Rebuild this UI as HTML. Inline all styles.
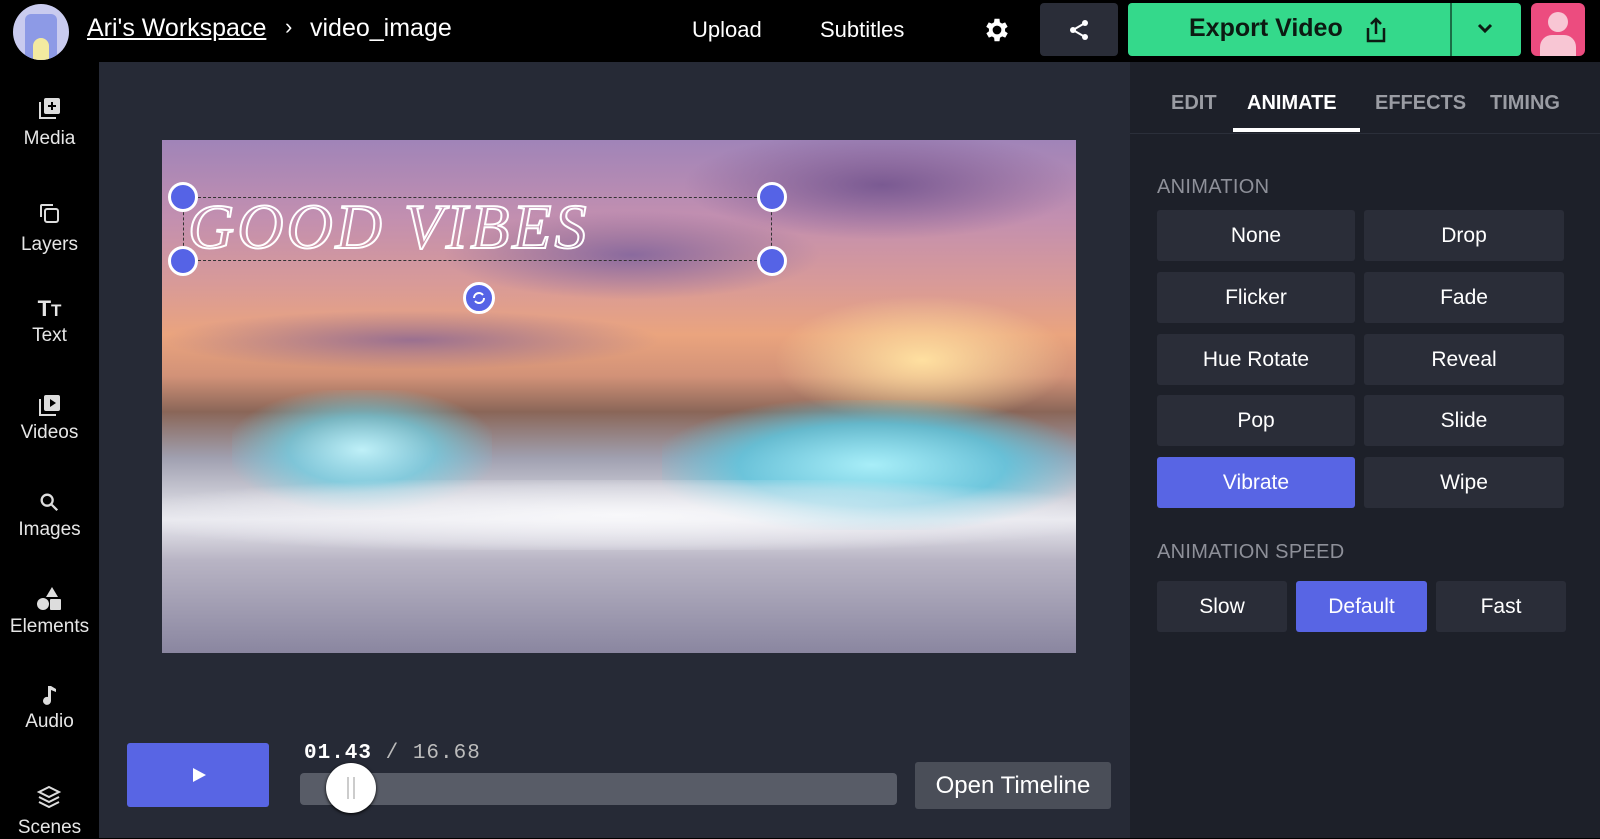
<!DOCTYPE html>
<html><head><meta charset="utf-8"><style>
*{margin:0;padding:0;box-sizing:border-box}
body{width:1600px;height:838px;overflow:hidden;background:#000;font-family:"Liberation Sans","DejaVu Sans",sans-serif;color:#fff;position:relative}
.a{position:absolute}
.top{left:0;top:0;width:1600px;height:62px;background:#000}
.side{left:0;top:62px;width:99px;height:776px;background:#000}
.si{position:absolute;width:99px;text-align:center;font-size:19px;color:#e6e6e6}
.main{left:99px;top:62px;width:1031px;height:776px;background:#262a36}
.right{left:1130px;top:62px;width:470px;height:776px;background:#1d2029}
.tab{position:absolute;top:92px;font-size:20px;font-weight:bold;color:#9a9ca3}
.lbl{position:absolute;font-size:20px;color:#8e9099;letter-spacing:.3px}
.btn{position:absolute;background:#2a2d38;border-radius:3px;color:#fff;font-size:21px;display:flex;align-items:center;justify-content:center}
.sel{background:#5865e4}
.h{position:absolute;width:30px;height:30px;border-radius:50%;background:#5563e6;border:3px solid #fff}
</style></head><body>
<div class="a top"></div>
<div class="a" style="left:13px;top:4px;width:56px;height:56px;border-radius:50%;background:#c9cbef;overflow:hidden">
 <div class="a" style="left:12px;top:10px;width:32px;height:46px;background:#8d9ae6;border-radius:6px 6px 0 0"></div>
 <div class="a" style="left:20px;top:34px;width:16px;height:22px;background:#f3eaa0;border-radius:8px 8px 0 0"></div>
</div>
<div class="a" style="left:87px;top:14px;font-size:25px;text-decoration:underline">Ari's Workspace</div>
<div class="a" style="left:285px;top:14px;font-size:22px">›</div>
<div class="a" style="left:310px;top:14px;font-size:25px">video_image</div>
<div class="a" style="left:692px;top:17px;font-size:22px">Upload</div>
<div class="a" style="left:820px;top:17px;font-size:22px">Subtitles</div>
<svg class="a" style="left:982px;top:15px" width="30" height="30" viewBox="0 0 24 24"><path fill="#fff" d="M19.4 13a7.5 7.5 0 0 0 0-2l2.1-1.6-2-3.5-2.5 1a7 7 0 0 0-1.7-1L15 3h-4l-.4 2.9a7 7 0 0 0-1.7 1l-2.5-1-2 3.5L6.6 11a7.5 7.5 0 0 0 0 2l-2.1 1.6 2 3.5 2.5-1a7 7 0 0 0 1.7 1L11 21h4l.4-2.9a7 7 0 0 0 1.7-1l2.5 1 2-3.5zM13 15.5a3.5 3.5 0 1 1 0-7 3.5 3.5 0 0 1 0 7z" transform="translate(-1 0)"/></svg>
<div class="a" style="left:1040px;top:3px;width:78px;height:53px;background:#2a2d38;border-radius:4px"></div>
<svg class="a" style="left:1067px;top:18px" width="24" height="24" viewBox="0 0 24 24" fill="#fff"><circle cx="18" cy="5" r="3"/><circle cx="6" cy="12" r="3"/><circle cx="18" cy="19" r="3"/><path d="M6 12L18 5M6 12l12 7" stroke="#fff" stroke-width="2"/></svg>
<div class="a" style="left:1128px;top:3px;width:393px;height:53px;background:#34d98b;border-radius:4px"></div>
<div class="a" style="left:1450px;top:3px;width:2px;height:53px;background:#1a6e46"></div>
<div class="a" style="left:1189px;top:14px;font-size:25px;font-weight:bold;color:#0c1a12">Export Video</div>
<svg class="a" style="left:1363px;top:16px" width="26" height="28" viewBox="0 0 26 28" fill="none" stroke="#0c1a12" stroke-width="2.5"><path d="M13 3v15M8 8l5-5 5 5M5 12v13h16V12"/></svg>
<svg class="a" style="left:1476px;top:22px" width="18" height="12" viewBox="0 0 18 12" fill="none" stroke="#0c1a12" stroke-width="3"><path d="M3 3l6 6 6-6"/></svg>
<div class="a" style="left:1531px;top:3px;width:54px;height:53px;background:#ec4c7f;border-radius:6px;overflow:hidden">
 <div class="a" style="left:17px;top:9px;width:20px;height:20px;border-radius:50%;background:#f8c6d4"></div>
 <div class="a" style="left:9px;top:32px;width:36px;height:26px;border-radius:12px 12px 0 0;background:#f8c6d4"></div>
</div>

<div class="a side"></div>
<svg class="a" style="left:38px;top:96px" width="24" height="24" viewBox="0 0 24 24" fill="#ddd"><rect x="6" y="2" width="16" height="16" rx="2"/><path d="M2 6v16h16" stroke="#ddd" stroke-width="2" fill="none"/><path d="M14 6v8M10 10h8" stroke="#000" stroke-width="2"/></svg>
<div class="si" style="top:128px">Media</div>
<svg class="a" style="left:37px;top:201px" width="24" height="24" viewBox="0 0 24 24" fill="none" stroke="#ddd" stroke-width="2"><rect x="8" y="8" width="13" height="13" rx="2"/><path d="M4 16V5a1 1 0 0 1 1-1h11"/></svg>
<div class="si" style="top:234px">Layers</div>
<div class="si" style="top:296px;font-weight:bold;font-size:22px">T<span style="font-size:17px">T</span></div>
<div class="si" style="top:325px">Text</div>
<svg class="a" style="left:38px;top:393px" width="24" height="24" viewBox="0 0 24 24" fill="#ddd"><rect x="6" y="2" width="16" height="16" rx="2"/><path d="M2 6v16h16" stroke="#ddd" stroke-width="2" fill="none"/><path d="M12 6v8l6-4z" fill="#000"/></svg>
<div class="si" style="top:422px">Videos</div>
<svg class="a" style="left:38px;top:491px" width="22" height="22" viewBox="0 0 24 24" fill="none" stroke="#ddd" stroke-width="2.5"><circle cx="10" cy="10" r="6"/><path d="M15 15l6 6"/></svg>
<div class="si" style="top:519px">Images</div>
<svg class="a" style="left:36px;top:586px" width="26" height="26" viewBox="0 0 26 26" fill="#ddd"><path d="M16 1l6 10H10z"/><circle cx="7" cy="18" r="6"/><rect x="14" y="13" width="11" height="11" rx="1"/></svg>
<div class="si" style="top:616px">Elements</div>
<svg class="a" style="left:40px;top:684px" width="18" height="24" viewBox="0 0 18 24" fill="#ddd"><path d="M8 2h3v15a4 4 0 1 1-3-4z"/><path d="M11 2l5 3v3l-5-2z"/></svg>
<div class="si" style="top:711px">Audio</div>
<svg class="a" style="left:36px;top:784px" width="26" height="26" viewBox="0 0 26 26" fill="none" stroke="#ddd" stroke-width="2"><path d="M13 3l10 5-10 5-10-5z"/><path d="M3 13l10 5 10-5M3 18l10 5 10-5"/></svg>
<div class="si" style="top:817px">Scenes</div>

<div class="a main"></div>
<div class="a" style="left:162px;top:140px;width:914px;height:513px;overflow:hidden;background:linear-gradient(180deg,#a084b8 0%,#c28fb0 15%,#d89a98 28%,#eaa47e 38%,#d29278 46%,#8a6658 53%,#a0a0b0 62%,#e8e8ee 74%,#b8b4c4 82%,#8a86a0 100%)">
 <div class="a" style="left:520px;top:-10px;width:400px;height:110px;background:radial-gradient(ellipse,#7a5a92 0%,rgba(122,90,146,0) 70%)"></div>
 <div class="a" style="left:280px;top:70px;width:380px;height:90px;background:radial-gradient(ellipse,#8a6a9e 0%,rgba(138,106,158,0) 70%)"></div>
 <div class="a" style="left:600px;top:150px;width:320px;height:140px;background:radial-gradient(ellipse,#ffe0a0 0%,rgba(255,200,120,0) 65%)"></div>
 <div class="a" style="left:0;top:170px;width:500px;height:60px;background:radial-gradient(ellipse,#9a7090 0%,rgba(154,112,144,0) 70%)"></div>
 <div class="a" style="left:70px;top:250px;width:260px;height:120px;background:radial-gradient(ellipse,#bff0f8 0%,rgba(110,210,230,.7) 40%,rgba(255,255,255,0) 75%)"></div>
 <div class="a" style="left:500px;top:260px;width:420px;height:130px;background:radial-gradient(ellipse,#a8eef8 0%,rgba(90,200,225,.8) 45%,rgba(255,255,255,0) 75%)"></div>
 <div class="a" style="left:0;top:340px;width:914px;height:70px;background:radial-gradient(ellipse,rgba(250,250,252,.9) 0%,rgba(240,240,245,.4) 60%,rgba(255,255,255,0) 80%)"></div>
</div>
<div class="a" style="left:183px;top:197px;width:589px;height:64px;border:1px dashed #333"></div>
<div class="a" style="left:188px;top:190px;font-family:'Liberation Serif',serif;font-style:italic;font-size:64px;color:transparent;-webkit-text-stroke:2px #fff;letter-spacing:3px">GOOD VIBES</div>
<div class="h" style="left:168px;top:182px"></div>
<div class="h" style="left:757px;top:182px"></div>
<div class="h" style="left:168px;top:246px"></div>
<div class="h" style="left:757px;top:246px"></div>
<div class="h" style="left:463px;top:282px;width:32px;height:32px"></div>
<svg class="a" style="left:471px;top:290px" width="16" height="16" viewBox="0 0 16 16" fill="none" stroke="#fff" stroke-width="2"><path d="M3 8a5 5 0 0 1 9-3M13 8a5 5 0 0 1-9 3"/></svg>

<div class="a" style="left:127px;top:743px;width:142px;height:64px;background:#5865e4;border-radius:3px"></div>
<svg class="a" style="left:191px;top:767px" width="16" height="16" viewBox="0 0 16 16"><path d="M2 1l13 7-13 7z" fill="#fff"/></svg>
<div class="a" style="left:304px;top:742px;font-family:'Liberation Mono',monospace;font-size:21px;letter-spacing:1px"><b>01.43</b> <span style="color:#bbb">/ 16.68</span></div>
<div class="a" style="left:300px;top:773px;width:597px;height:32px;background:#585c67;border-radius:4px"></div>
<div class="a" style="left:326px;top:763px;width:50px;height:50px;border-radius:50%;background:#fff;box-shadow:0 1px 3px #000"></div>
<div class="a" style="left:347px;top:777px;width:2px;height:22px;background:#ccc"></div>
<div class="a" style="left:353px;top:777px;width:2px;height:22px;background:#ccc"></div>
<div class="a" style="left:915px;top:762px;width:196px;height:47px;background:#4a4e58;border-radius:3px;font-size:24px;display:flex;align-items:center;justify-content:center">Open Timeline</div>

<div class="a right"></div>
<div class="tab" style="left:1171px">EDIT</div>
<div class="tab" style="left:1247px;color:#fff">ANIMATE</div>
<div class="tab" style="left:1375px">EFFECTS</div>
<div class="tab" style="left:1490px">TIMING</div>
<div class="a" style="left:1233px;top:128px;width:127px;height:4px;background:#fff"></div>
<div class="a" style="left:1130px;top:133px;width:470px;height:1px;background:#2b2f3a"></div>
<div class="lbl" style="left:1157px;top:176px">ANIMATION</div>
<div class="btn" style="left:1157px;top:210px;width:198px;height:51px">None</div>
<div class="btn" style="left:1364px;top:210px;width:200px;height:51px">Drop</div>
<div class="btn" style="left:1157px;top:272px;width:198px;height:51px">Flicker</div>
<div class="btn" style="left:1364px;top:272px;width:200px;height:51px">Fade</div>
<div class="btn" style="left:1157px;top:334px;width:198px;height:51px">Hue Rotate</div>
<div class="btn" style="left:1364px;top:334px;width:200px;height:51px">Reveal</div>
<div class="btn" style="left:1157px;top:395px;width:198px;height:51px">Pop</div>
<div class="btn" style="left:1364px;top:395px;width:200px;height:51px">Slide</div>
<div class="btn sel" style="left:1157px;top:457px;width:198px;height:51px">Vibrate</div>
<div class="btn" style="left:1364px;top:457px;width:200px;height:51px">Wipe</div>
<div class="lbl" style="left:1157px;top:541px">ANIMATION SPEED</div>
<div class="btn" style="left:1157px;top:581px;width:130px;height:51px">Slow</div>
<div class="btn sel" style="left:1296px;top:581px;width:131px;height:51px">Default</div>
<div class="btn" style="left:1436px;top:581px;width:130px;height:51px">Fast</div>
</body></html>
